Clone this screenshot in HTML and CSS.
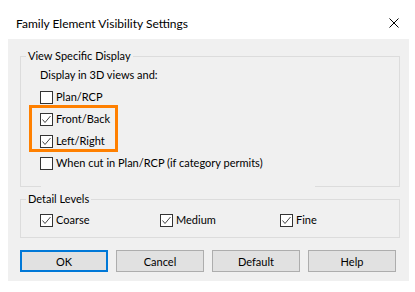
FILE: index.html
```html
<!DOCTYPE html>
<html lang="en">
<head>
    <meta charset="UTF-8">
    <title>Family Element Visibility Settings</title>
    <link rel="stylesheet" href="styles.css">
</head>
<body>
    <div class="titlebar">
        <span class="title">Family Element Visibility Settings</span>
        <svg class="close" width="10" height="10" viewBox="0 0 10 10">
            <path d="M0.5 0.5 L9.5 9.5 M9.5 0.5 L0.5 9.5" stroke="#000" stroke-width="1" fill="none"/>
        </svg>
    </div>

    <div class="dialog">
        <div class="group view-group">
            <div class="group-title">View Specific Display</div>
            <div class="hint">Display in 3D views and:</div>

            <label class="check-row"><span class="box"></span>Plan/RCP</label>
            <label class="check-row"><span class="box checked"><svg width="11" height="11" viewBox="0 0 11 11"><path d="M1.5 5.5 L4 8.5 L9.5 2" stroke="#444" stroke-width="1" fill="none"/></svg></span>Front/Back</label>
            <label class="check-row"><span class="box checked"><svg width="11" height="11" viewBox="0 0 11 11"><path d="M1.5 5.5 L4 8.5 L9.5 2" stroke="#444" stroke-width="1" fill="none"/></svg></span>Left/Right</label>
            <label class="check-row"><span class="box"></span>When cut in Plan/RCP (if category permits)</label>

            <span class="highlight"></span>
            <span class="border-gap"></span>
        </div>

        <div class="group detail-group">
            <div class="group-title">Detail Levels</div>
            <div class="levels">
                <label class="check-row"><span class="box checked"><svg width="11" height="11" viewBox="0 0 11 11"><path d="M1.5 5.5 L4 8.5 L9.5 2" stroke="#444" stroke-width="1" fill="none"/></svg></span>Coarse</label>
                <label class="check-row"><span class="box checked"><svg width="11" height="11" viewBox="0 0 11 11"><path d="M1.5 5.5 L4 8.5 L9.5 2" stroke="#444" stroke-width="1" fill="none"/></svg></span>Medium</label>
                <label class="check-row"><span class="box checked"><svg width="11" height="11" viewBox="0 0 11 11"><path d="M1.5 5.5 L4 8.5 L9.5 2" stroke="#444" stroke-width="1" fill="none"/></svg></span>Fine</label>
            </div>
        </div>

        <div class="buttons">
            <button class="default-btn">OK</button>
            <button>Cancel</button>
            <button>Default</button>
            <button>Help</button>
        </div>
    </div>
</body>
</html>
```

FILE: styles.css
```css
body {
    margin: 0;
    background-color: #fff;
    color: #000;
    font-family: 'Lato', 'Noto Sans', sans-serif;
    font-size: 11px;
    line-height: 16px;
}

.titlebar {
    height: 39px;
    display: flex;
    align-items: flex-start;
    justify-content: space-between;
    padding: 16px 16px 0 16px;
    box-sizing: border-box;
    font-size: 12px;
}

.close {
    margin-top: 2px;
}

.dialog {
    width: 401px;
    height: 242px;
    margin-left: 8px;
    background-color: #f0f0f0;
    padding: 17px 9px 0 12px;
    box-sizing: border-box;
}

.group {
    position: relative;
    border: 1px solid #dcdcdc;
}

.group-title {
    width: fit-content;
    margin: -9px 0 0 -14px;
    padding: 0 2px;
    background-color: #f0f0f0;
}

.view-group {
    padding: 0 0 12px 19px;
}

.hint {
    margin-top: 3px;
    margin-bottom: 3px;
}

.check-row {
    display: flex;
    align-items: center;
    height: 22px;
    gap: 3px;
}

.box {
    width: 11px;
    height: 11px;
    border: 1px solid #333;
    background-color: #fff;
    display: flex;
}

.highlight {
    position: absolute;
    left: 8px;
    top: 48px;
    width: 83px;
    height: 41px;
    border: 3px solid #ff8000;
}

.border-gap {
    position: absolute;
    left: 20px;
    right: 84px;
    bottom: -1px;
    height: 1px;
    background-color: #f0f0f0;
}

.detail-group {
    margin-top: 12px;
    padding: 0 0 6px 19px;
}

.levels {
    display: grid;
    grid-template-columns: 120px 120px 120px;
    margin-top: 2px;
}

.buttons {
    display: flex;
    gap: 8px;
    margin-top: 12px;
}

button {
    width: 88px;
    height: 22px;
    background-color: #e1e1e1;
    border: 1px solid #adadad;
    font-family: inherit;
    font-size: 11px;
    color: #000;
    padding: 0;
}

.default-btn {
    border: 2px solid #0078d7;
}
```
